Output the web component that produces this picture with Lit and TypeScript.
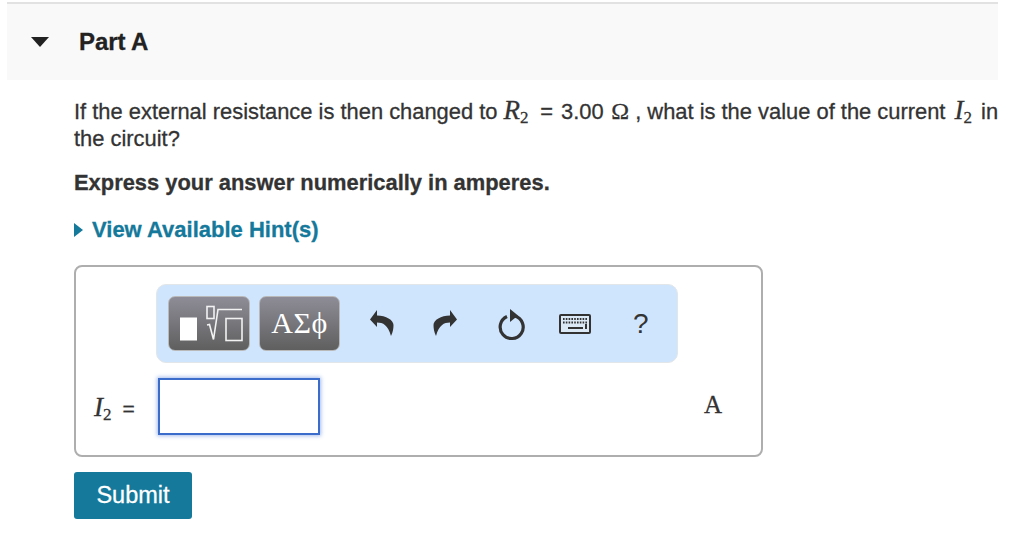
import { LitElement, html, css } from "lit";
import { customElement } from "lit/decorators.js";

@customElement("app-root")
export class AppRoot extends LitElement {
  static styles = css`
    :host { display: block; width: 1024px; height: 541px; overflow: hidden; background: #fff; font-family: "Liberation Sans", Arial, sans-serif; color: #333; -webkit-text-stroke: 0.3px currentColor; }
    .part { margin: 2px 26px 0 7px; border-top: 2px solid #e2e2e2; }
    .head { height: 76px; background: #f9f9f9; display: flex; align-items: center; color: #222; }
    .caret { width: 18px; height: 10px; margin-left: 24px; margin-right: 30px; display: block; }
    .title { font-size: 24px; font-weight: 700; letter-spacing: -0.1px; }
    .body { padding: 17px 0 0 67px; }
    .q { margin: 0; font-size: 21.9px; line-height: 27px; white-space: nowrap; }
    .m { font-family: "Liberation Serif", serif; font-style: italic; font-size: 27px; }
    .s { font-size: 17px; font-style: normal; line-height: 0; vertical-align: -4px; }
    .r2 { margin-right: 5.5px; }
    .e { margin-right: 2px; }
    .i2 { margin-left: 3px; margin-right: 3px; }
    .om { font-family: "Liberation Serif", serif; font-size: 24px; line-height: 0; margin-left: 1.5px; }
    .ex { margin: 17px 0 0; font-size: 21.9px; font-weight: 700; line-height: 27px; }
    .hint { margin-top: 20px; display: flex; align-items: center; gap: 9px; color: #14799b; font-size: 22px; font-weight: 700; line-height: 27px; }
    .hint svg { width: 9px; height: 14px; display: block; }
    .box { margin-top: 22px; width: 689px; height: 192px; box-sizing: border-box; border: 2px solid #aeaeae; border-radius: 8px; padding: 17px 0 0 80px; }
    .toolbar { width: 522px; height: 79px; box-sizing: border-box; background: #cfe5fd; border: 1px solid #e3e6e8; border-radius: 10px; display: flex; align-items: center; padding-left: 11px; -webkit-text-stroke: 0; }
    .tb { width: 82px; height: 55px; flex: none; box-sizing: border-box; border: 1px solid #b9b9b9; border-radius: 7px; background: linear-gradient(#8e8d97, #5f5f5f); display: flex; align-items: center; justify-content: center; color: #fff; }
    .tb + .tb { margin-left: 9px; width: 81px; }
    .tb svg { width: 76px; height: 46px; display: block; }
    .greek { font-family: "Liberation Serif", serif; font-size: 30px; letter-spacing: 0.5px; padding-bottom: 2px; }
    .ic { width: 30px; height: 34px; display: block; flex: none; color: #333; }
    .undo { margin-left: 27px; }
    .redo { margin-left: 33px; }
    .reset { margin-left: 37px; }
    .kbd { margin-left: 31px; width: 34px; }
    .qm { margin-left: 41px; font-size: 28px; color: #333; line-height: 1; }
    .row { margin: 15px 0 0 -62px; display: flex; align-items: center; height: 57px; }
    .lab { width: 64px; flex: none; font-size: 21px; white-space: nowrap; margin-top: 2px; }
    .eq { font-size: 21px; margin-left: 11px; }
    .inp { width: 162px; height: 57px; box-sizing: border-box; border: 2px solid #3c6ccb; box-shadow: 0 0 4px 1px #a6bdec; background: #fff; }
    .unit { margin-left: auto; margin-right: 39px; font-family: "Liberation Serif", serif; font-size: 25px; color: #333; padding-bottom: 4px; }
    .submit { margin-top: 15px; width: 118px; height: 47px; border: 0; border-radius: 3px; background: #14799b; color: #fff; font-family: inherit; font-size: 23.5px; padding: 0; display: block; -webkit-text-stroke: 0.3px #fff; }
  `;

  render() {
    return html`
      <div class="part">
        <div class="head">
          <svg class="caret" viewBox="0 0 18 10"><path d="M0 0H18L9 10Z" fill="#222"/></svg>
          <span class="title">Part A</span>
        </div>
        <div class="body">
          <p class="q">If the external resistance is then changed to <span class="m r2">R<span class="s">2</span></span> <span class="e">=</span> 3.00 <span class="om">Ω</span> , what is the value of the current <span class="m i2">I<span class="s">2</span></span> in<br />the circuit?</p>
          <p class="ex">Express your answer numerically in amperes.</p>
          <div class="hint">
            <svg viewBox="0 0 9 14"><path d="M0 0L9 7L0 14Z" fill="#14799b"/></svg>
            <span>View Available Hint(s)</span>
          </div>
          <div class="box">
            <div class="toolbar">
              <div class="tb">
                <svg viewBox="0 0 76 46" fill="none" stroke="#f2f2f2" stroke-width="1.600">
                  <rect x="9" y="16.500" width="17" height="23" fill="#fff" stroke="none"/>
                  <rect x="36" y="5.500" width="7" height="12"/>
                  <path d="M36 24l2.500 -.5 4 15 4.500 -30h24"/>
                  <rect x="55" y="17.500" width="16" height="22"/>
                </svg>
              </div>
              <div class="tb greek">ΑΣϕ</div>
              <svg class="ic undo" viewBox="0 0 30 34"><path d="M10 3L3 12.500L10 20V15.500C16 15.500 21 18 24 29C26 25 26.500 21 26.500 18C26.500 13 19 8.500 10 8.500Z" fill="#333"/></svg>
              <svg class="ic redo" viewBox="0 0 30 34"><path d="M20 3L27 12.500L20 20V15.500C14 15.500 9 18 6 29C4 25 3.500 21 3.500 18C3.500 13 11 8.500 20 8.500Z" fill="#333"/></svg>
              <svg class="ic reset" viewBox="0 0 30 34" fill="none"><path d="M10 9.500A11.500 11.500 0 1 0 18 9" stroke="#333" stroke-width="3.200"/><path d="M13 2L21 8.500L13 15Z" fill="#333"/></svg>
              <svg class="ic kbd" viewBox="0 0 34 24"><rect x="1" y="2" width="32" height="20" rx="2" fill="#333"/><rect x="3" y="4" width="28" height="16" fill="#dbe8f5"/><path d="M5 7h24M5 10.500h24" stroke="#333" stroke-width="1.800" stroke-dasharray="1.600 1.200"/><path d="M10 16h15M28 12v5" stroke="#333" stroke-width="2"/></svg>
              <span class="qm">?</span>
            </div>
            <div class="row">
              <div class="lab"><span class="m">I<span class="s">2</span></span><span class="eq">=</span></div>
              <div class="inp"></div>
              <span class="unit">A</span>
            </div>
          </div>
          <button class="submit">Submit</button>
        </div>
      </div>
    `;
  }
}
